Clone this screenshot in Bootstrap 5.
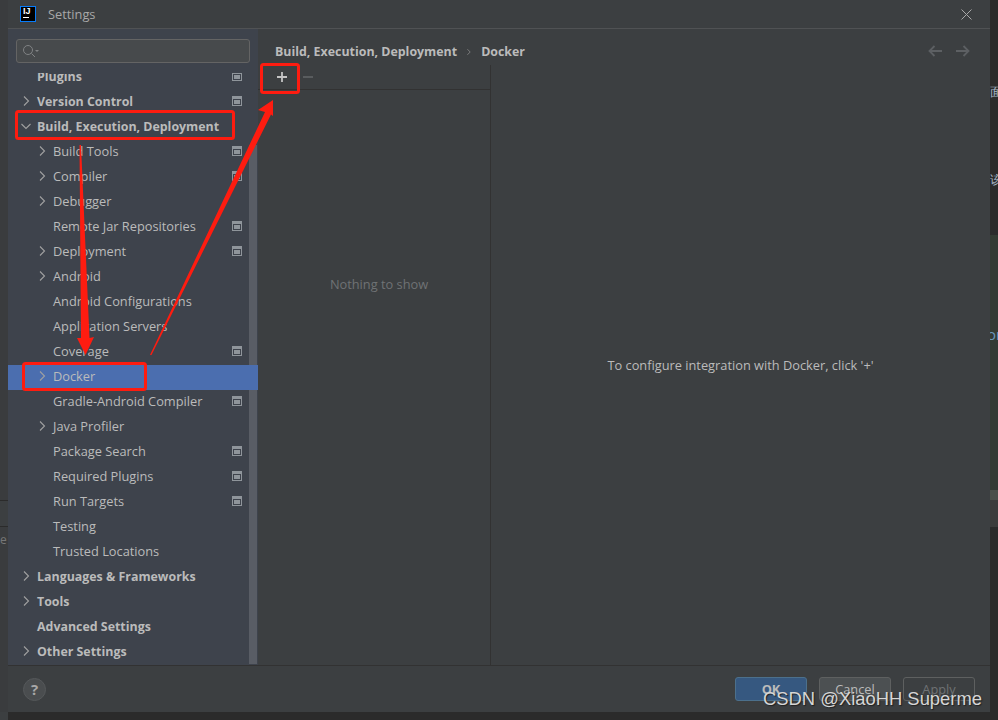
<!DOCTYPE html>
<html lang="en">
<head>
<meta charset="UTF-8">
<title>Settings</title>
<link href="https://cdn.jsdelivr.net/npm/bootstrap@5.3.0/dist/css/bootstrap.min.css" rel="stylesheet">
<style>
html, body { height: 720px; overflow: hidden; }
body { background: #2b2b2b; font-family: "Open Sans", "Liberation Sans", sans-serif; font-size: 12.8px; color: #bbb; position: relative; }
.strip { width: 8px; height: 720px; overflow: hidden; flex: none; font-size: 12px; line-height: 16px; }
.strip-left { background: #333537; }
.strip-left .s1 { height: 500px; background: #3a3c3e; }
.strip-left .s2 { height: 27px; border-top: 1px solid #2b2b2b; border-bottom: 1px solid #2b2b2b; background: #3c3f41; }
.strip-left .s3 { height: 185px; background: #3a3c3e; padding-top: 5px; color: #777; }
.strip-left .s4 { height: 8px; background: #3c3f41; }
.strip-right .s1 { height: 235px; background: #2b2b2b; padding-top: 84px; color: #a9b7c6; }
.strip-right .s2 { height: 255px; background: #333b33; padding-top: 91px; color: #6897bb; font-size: 15px; }
.strip-right .s2 span { margin-left: -3px; display: block; }
.strip-right .s3 { height: 10px; background: #4a4f4a; }
.strip-right .s4 { height: 27px; background: #3c3c3c; }
.glyph-gap { height: 72px; }
.dialog { width: 982px; height: 712px; background: #3c3f41; flex: none; }
.titlebar { height: 29px; border-bottom: 1px solid #505254; padding-left: 12px; padding-right: 18px; color: #a8a8a8; }
.titlebar span { padding-top: 1px; }
.ij-logo { width: 16px; height: 16px; background: #000; border: 1px solid #087cfa; color: #fff; font: 700 9px/9px "Liberation Sans", sans-serif; padding-left: 2px; margin-right: 12px; }
.ij-logo i { display: block; width: 6px; height: 1px; background: #fff; margin-top: 1px; }
.main { height: 636px; }
.sidebar { width: 250px; background: #3e434c; flex: none; }
.search-wrap { height: 44px; padding: 10px 8px 0; }
.search { height: 24px; background: #474a4c; border: 1px solid #646464; border-radius: 3px; padding-left: 5px; }
.tree { height: 592px; overflow: hidden; position: relative; }
.tree .list-group { margin-top: -8px; --bs-list-group-bg: transparent; --bs-list-group-color: #bbb; --bs-list-group-border-width: 0; border-radius: 0; }
.tree .list-group-item { height: 25px; line-height: 22px; padding: 0 0 0 45px; position: relative; white-space: nowrap; }
.tree .top { padding-left: 29px; font-weight: 700; font-size: 12.4px; line-height: 24px; }
.tree .list-group-item.active { background: #4b6eaf; color: #bbb; }
.tree .chev { position: absolute; left: 29px; top: 6px; }
.tree .top .chev { left: 13px; }
.tree .prj { position: absolute; left: 224px; top: 6px; }
.tree-scroll { position: absolute; left: 241px; top: 72px; bottom: 1px; width: 8px; background: rgba(255,255,255,.14); }
.content { flex: 1; min-width: 0; }
.crumbs { height: 36px; padding: 10px 20px 0 17px; line-height: 26px; font-weight: 700; font-size: 12.4px; white-space: nowrap; }
.arrows { gap: 14px; margin-top: -2px; }
.panes { height: 600px; }
.pane-list { width: 233px; border-right: 1px solid #323232; flex: none; }
.toolbar { height: 25px; border-bottom: 1px solid #323232; padding-left: 18px; gap: 15px; }
.empty { color: #6f7274; padding: 185px 0 0 10px; text-align: center; }
.pane-body { color: #bbb; padding-top: 1px; }
.footer { height: 47px; border-top: 1px solid #323232; padding: 0 15px 0 15px; }
.help { width: 23px; height: 23px; background: #4a4d4f; border: 1px solid #55585a; border-radius: 50%; color: #a8a8a8; font-weight: 700; font-size: 15px; line-height: 20px; padding: 0; }
.btn-ide { width: 72px; height: 24px; padding: 0; font-size: 12.8px; line-height: 22px; border-radius: 3px; color: #bbb; background: #4c5052; border: 1px solid #5e6060; }
.btn-ide.ok { background: #365880; border-color: #4c708c; font-weight: 700; }
.btn-ide.off { background: transparent; border-color: #5e6060; color: #6f7274; }
.overlay { position: absolute; left: 0; top: 0; pointer-events: none; z-index: 5; }
.watermark { position: absolute; left: 763px; top: 687px; z-index: 6; font: 18.4px/24px "Liberation Sans", sans-serif; color: #d6d6d6; text-shadow: 1px 1px 1px #222; white-space: nowrap; }
</style>
</head>
<body>
<svg width="0" height="0" class="position-absolute">
  <symbol id="chev" viewBox="0 0 10 10"><path d="M3 .5 7.5 5 3 9.5" fill="none" stroke="#a0a0a0" stroke-width="1.1"/></symbol>
  <symbol id="chev-down" viewBox="0 0 10 10"><path d="M.5 3 5 7.5 9.5 3" fill="none" stroke="#a0a0a0" stroke-width="1.1"/></symbol>
  <symbol id="prj" viewBox="0 0 10 10"><rect x=".5" y=".5" width="9" height="9" fill="none" stroke="#8f959b"/><rect x="1" y="1" width="8" height="2" fill="#8f959b"/><rect x="2" y="4" width="6" height="4" fill="#8f959b"/></symbol>
</svg>

<div class="d-flex">
  <div class="strip strip-left">
    <div class="s1"></div><div class="s2"></div><div class="s3">e</div><div class="s4"></div>
  </div>

  <div class="dialog d-flex flex-column">
    <div class="titlebar d-flex align-items-center">
      <div class="ij-logo">IJ<i></i></div>
      <span>Settings</span>
      <svg class="ms-auto" width="11" height="11" viewBox="0 0 11 11"><path d="M.5.5l10 10M10.5.5l-10 10" stroke="#a8a8a8" fill="none"/></svg>
    </div>

    <div class="main d-flex">
      <div class="sidebar">
        <div class="search-wrap">
          <div class="search d-flex align-items-center">
            <svg width="18" height="14" viewBox="0 0 18 14"><circle cx="6" cy="6" r="4.5" fill="none" stroke="#808284"/><path d="M9.500 9.500 13 13" stroke="#808284" fill="none"/><path d="M13 6h4l-2 2z" fill="#808284"/></svg>
          </div>
        </div>
        <div class="tree">
          <div class="list-group" id="tree"></div>
          <div class="tree-scroll"></div>
        </div>
      </div>

      <div class="content d-flex flex-column">
        <div class="crumbs d-flex">
          <span>Build, Execution, Deployment</span>
          <svg class="mx-2 mt-2" width="8" height="10" viewBox="0 0 10 10"><path d="M3 1.500 6.500 5 3 8.500" fill="none" stroke="#8a8a8a"/></svg>
          <span>Docker</span>
          <span class="ms-auto d-flex align-items-center arrows">
            <svg width="14" height="12" viewBox="0 0 14 12"><path d="M14 6H1.500M6.500 1 1.500 6l5 5" fill="none" stroke="#5d6063" stroke-width="1.8"/></svg>
            <svg width="14" height="12" viewBox="0 0 14 12"><path d="M0 6h12.500M7.500 1l5 5-5 5" fill="none" stroke="#5d6063" stroke-width="1.8"/></svg>
          </span>
        </div>
        <div class="panes d-flex">
          <div class="pane-list d-flex flex-column">
            <div class="toolbar d-flex align-items-center">
              <svg width="12" height="12" viewBox="0 0 12 12"><path d="M6 1v10M1 6h10" stroke="#c4c4c4" stroke-width="1.8"/></svg>
              <svg width="10" height="12" viewBox="0 0 10 12"><path d="M0 6h10" stroke="#5d6063" stroke-width="1.8"/></svg>
            </div>
            <div class="empty flex-grow-1">Nothing to show</div>
          </div>
          <div class="pane-body flex-grow-1 d-flex align-items-center justify-content-center">To configure integration with Docker, click '+'</div>
        </div>
      </div>
    </div>

    <div class="footer d-flex align-items-center">
      <button class="help me-auto" type="button">?</button>
      <div class="d-flex gap-2 pt-0">
        <button class="btn-ide ok me-1" type="button">OK</button>
        <button class="btn-ide me-1" type="button">Cancel</button>
        <button class="btn-ide off" type="button">Apply</button>
      </div>
    </div>
  </div>

  <div class="strip strip-right">
    <div class="s1">面<div class="glyph-gap"></div>该</div>
    <div class="s2"><span>or</span></div>
    <div class="s3"></div>
    <div class="s4"></div>
  </div>
</div>

<svg class="overlay" width="998" height="720" viewBox="0 0 998 720">
  <g fill="none" stroke="#fe1c10" stroke-width="3">
    <rect x="16.500" y="111.500" width="217" height="27" rx="2"/>
    <rect x="261.500" y="64.500" width="37" height="28" rx="2"/>
    <rect x="23.500" y="363.500" width="122" height="26" rx="2"/>
  </g>
  <g fill="#fe1c10">
    <path d="M79.500 145 81 338H77L85.500 355 94 337 89.500 338 81 145z"/>
    <path d="M150 355 265 112 258 110 273 100 273 116 271 114.500 151.500 355z"/>
  </g>
</svg>
<div class="watermark">CSDN @XiaoHH Superme</div>

<script>
  // [label, level, arrow, has project icon]
  const rows = [
    ["Plugins", 0, "", 1], ["Version Control", 0, "r", 1], ["Build, Execution, Deployment", 0, "d", 0],
    ["Build Tools", 1, "r", 1], ["Compiler", 1, "r", 1], ["Debugger", 1, "r", 0],
    ["Remote Jar Repositories", 1, "", 1], ["Deployment", 1, "r", 1], ["Android", 1, "r", 0],
    ["Android Configurations", 1, "", 0], ["Application Servers", 1, "", 0], ["Coverage", 1, "", 1],
    ["Docker", 1, "r", 0, true], ["Gradle-Android Compiler", 1, "", 1], ["Java Profiler", 1, "r", 0],
    ["Package Search", 1, "", 1], ["Required Plugins", 1, "", 1], ["Run Targets", 1, "", 1],
    ["Testing", 1, "", 0], ["Trusted Locations", 1, "", 0], ["Languages & Frameworks", 0, "r", 0],
    ["Tools", 0, "r", 0], ["Advanced Settings", 0, "", 0], ["Other Settings", 0, "r", 0]
  ];
  document.getElementById("tree").innerHTML = rows.map(([label, level, arrow, prj, active]) => {
    let html = `<div class="list-group-item${level ? "" : " top"}${active ? " active" : ""}">`;
    if (arrow) html += `<svg class="chev" width="10" height="10"><use href="#${arrow == "d" ? "chev-down" : "chev"}"/></svg>`;
    html += label.replace("&", "&amp;");
    if (prj) html += `<svg class="prj" width="10" height="10"><use href="#prj"/></svg>`;
    return html + "</div>";
  }).join("");
</script>
<script src="https://cdn.jsdelivr.net/npm/bootstrap@5.3.0/dist/js/bootstrap.bundle.min.js"></script>
</body>
</html>
